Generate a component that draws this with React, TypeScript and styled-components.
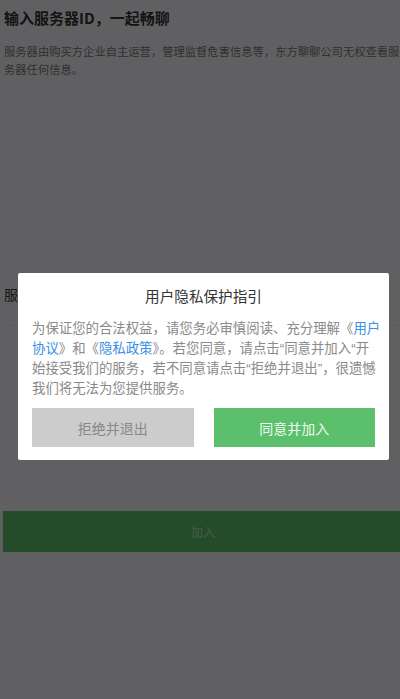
import React from "react";
import styled, { createGlobalStyle } from "styled-components";

const Global = createGlobalStyle`
  html, body { margin: 0; padding: 0; overflow: hidden; }
  body {
    width: 400px; height: 699px;
    background: #f0f1f4;
    font-family: "Noto Sans CJK SC", "Noto Sans", sans-serif;
  }
`;

const Page = styled.div`
  width: 407px;
  height: 699px;
  box-sizing: border-box;
  padding: 0 4px;
  background: #f0f1f4;
  display: flex;
  flex-direction: column;
`;

const Title = styled.h1`
  margin: 6px 0 0;
  font-size: 15px;
  line-height: 24px;
  font-weight: 700;
  color: #333;
  white-space: nowrap;
`;

const Desc = styled.p`
  margin: 12px 0 0;
  font-size: 11.3px;
  line-height: 18px;
  color: #777;
`;

const Field = styled.div`
  margin-top: 203px;
  height: 44px;
  border-bottom: 1px solid #e0e0e0;
  display: flex;
  align-items: flex-start;
`;

const Label = styled.span`
  font-size: 14px;
  line-height: 26px;
  color: #333;
`;

const JoinButton = styled.button`
  margin: 185px 0 0 -1px;
  height: 41px;
  width: 400px;
  border: none;
  background: #5bbf6b;
  color: rgba(255, 255, 255, 0.55);
  font-family: inherit;
  font-size: 12px;
`;

const Mask = styled.div`
  position: fixed;
  left: 0;
  top: 0;
  width: 407px;
  height: 699px;
  background: rgba(0, 0, 0, 0.6);
  display: flex;
  justify-content: center;
  align-items: flex-start;
  padding-top: 273px;
  box-sizing: border-box;
`;

const Dialog = styled.div`
  width: 371px;
  box-sizing: border-box;
  background: #fff;
  border-radius: 2px;
  padding: 11px 14px 13px;
  display: flex;
  flex-direction: column;
`;

const DialogTitle = styled.div`
  text-align: center;
  font-size: 14.6px;
  line-height: 24px;
  color: #333;
`;

const Body = styled.div`
  margin-top: 9px;
  font-size: 13.4px;
  line-height: 20px;
  color: #8a8a8a;
  white-space: nowrap;
`;

const Link = styled.span`
  color: #3a8ee6;
`;

const Quote = styled.span`
  font-family: "Liberation Sans", sans-serif;
  line-height: 0;
`;

const Actions = styled.div`
  margin-top: 11px;
  display: grid;
  grid-template-columns: 1fr 1fr;
  gap: 20px;
`;

const ActionButton = styled.button<{ $primary?: boolean }>`
  height: 39px;
  border: none;
  border-radius: 0;
  font-family: inherit;
  font-size: 14px;
  background: ${(p) => (p.$primary ? "#5bbf6b" : "#cccccc")};
  color: ${(p) => (p.$primary ? "#eef9f0" : "#888888")};
`;

export default function App() {
  return (
    <>
      <Global />
      <Page>
        <Title>输入服务器ID，一起畅聊</Title>
        <Desc>
          服务器由购买方企业自主运营，管理监督危害信息等，东方聊聊公司无权查看服务器任何信息。
        </Desc>
        <Field>
          <Label>服务器ID</Label>
        </Field>
        <JoinButton>加入</JoinButton>
      </Page>
      <Mask>
        <Dialog>
          <DialogTitle>用户隐私保护指引</DialogTitle>
          <Body>
            为保证您的合法权益，请您务必审慎阅读、充分理解《<Link>用户</Link>
            <br />
            <Link>协议</Link>》和《<Link>隐私政策</Link>》。若您同意，请点击<Quote>“</Quote>同意并加入<Quote>“</Quote>开
            <br />
            始接受我们的服务，若不同意请点击<Quote>“</Quote>拒绝并退出<Quote>”</Quote>，很遗憾
            <br />
            我们将无法为您提供服务。
          </Body>
          <Actions>
            <ActionButton>拒绝并退出</ActionButton>
            <ActionButton $primary>同意并加入</ActionButton>
          </Actions>
        </Dialog>
      </Mask>
    </>
  );
}
